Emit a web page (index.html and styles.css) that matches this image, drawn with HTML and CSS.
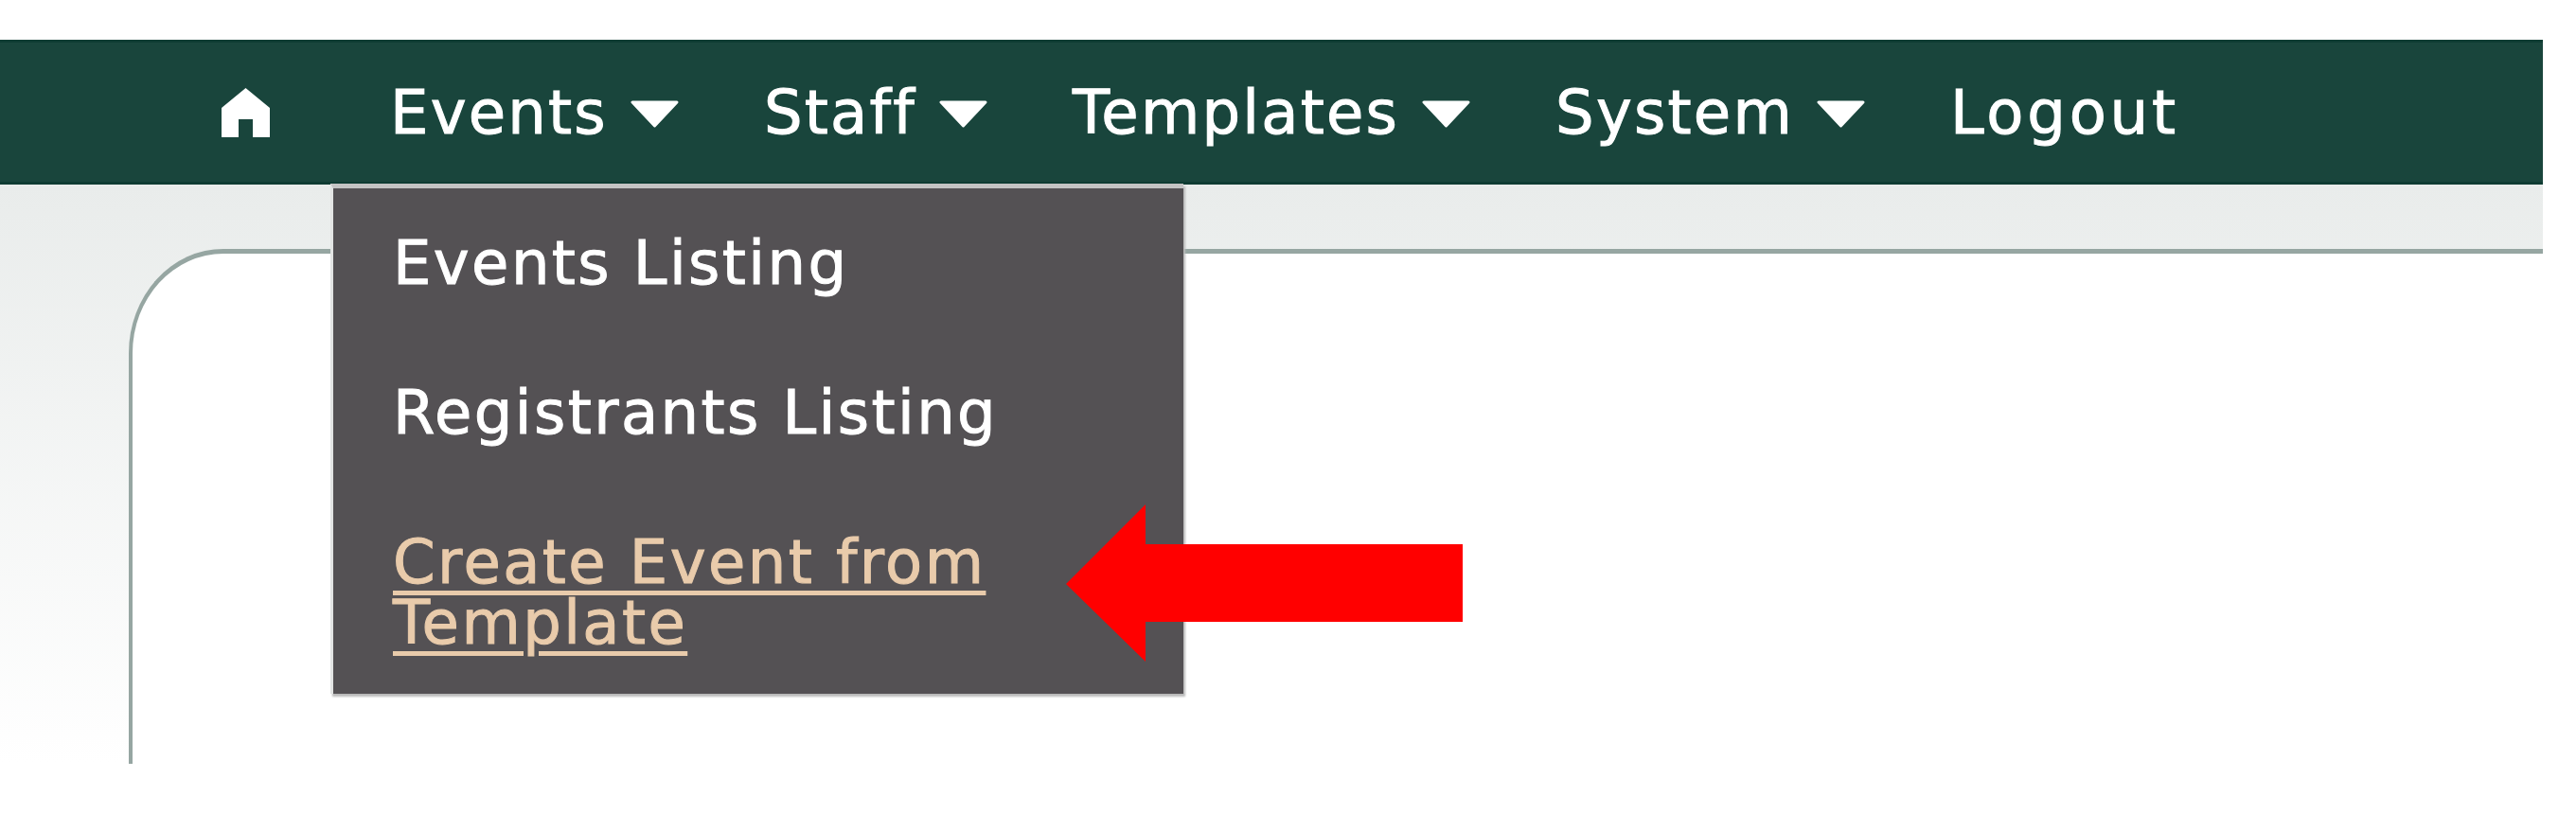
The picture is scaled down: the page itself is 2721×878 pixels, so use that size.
FILE: index.html
```html
<!DOCTYPE html>
<html lang="en">
<head>
  <meta charset="UTF-8" />
  <title>Events</title>
  <link rel="stylesheet" href="styles.css">
</head>
<body>
  <div class="page">
    <nav class="topbar">
      <a class="nav-home" href="#" aria-label="Home">
        <svg class="home-icon" viewBox="0 0 51 52"><path d="M25.5 0 L51 21 V52 H33 V33 H18 V52 H0 V21 Z" /></svg>
      </a>
      <div class="nav-item nav-events">
        <a href="#">Events</a>
        <svg class="caret" viewBox="0 0 53 29"><path d="M3 2 H50 L26.5 27 Z" /></svg>
        <div class="dropdown">
          <a href="#">Events Listing</a>
          <a href="#">Registrants Listing</a>
          <a href="#" class="active">Create Event from Template</a>
        </div>
      </div>
      <div class="nav-item">
        <a href="#">Staff</a>
        <svg class="caret" viewBox="0 0 53 29"><path d="M3 2 H50 L26.5 27 Z" /></svg>
      </div>
      <div class="nav-item">
        <a href="#">Templates</a>
        <svg class="caret" viewBox="0 0 53 29"><path d="M3 2 H50 L26.5 27 Z" /></svg>
      </div>
      <div class="nav-item">
        <a href="#">System</a>
        <svg class="caret" viewBox="0 0 53 29"><path d="M3 2 H50 L26.5 27 Z" /></svg>
      </div>
      <div class="nav-item">
        <a href="#" class="nav-logout">Logout</a>
      </div>
    </nav>

    <div class="shell">
      <div class="card"></div>
    </div>

    <svg class="arrow" viewBox="0 0 419 166"><path d="M0 84 L84 0 V42 H419 V124 H84 V166 Z" /></svg>
  </div>
</body>
</html>
```

FILE: styles.css
```css
html, body {
  margin: 0;
  padding: 0;
  background: #fff;
  font-family: "DejaVu Sans", sans-serif;
}

.page {
  position: relative;
  width: 2686px;
  height: 878px;
  padding-top: 42px;
  box-sizing: border-box;
}

.topbar {
  display: flex;
  align-items: center;
  gap: 89px;
  height: 153px;
  box-sizing: border-box;
  padding-left: 234px;
  background: #19453c;
  border-top: 3px solid #0f3c33;
  border-bottom: 3px solid #0f3c33;
}

.topbar a {
  color: #fff;
  text-decoration: none;
  font-size: 64px;
  letter-spacing: 2.2px;
  -webkit-text-stroke: 1px currentColor;
  filter: blur(0.5px);
}

.nav-home {
  display: flex;
  margin-right: 38px;
}

.home-icon {
  width: 51px;
  height: 52px;
  fill: #fff;
}

.nav-item {
  display: flex;
  align-items: center;
  gap: 23px;
}

.nav-events {
  position: relative;
}

.caret {
  width: 53px;
  height: 29px;
  margin-top: 4px;
  fill: #fff;
  stroke: #fff;
  stroke-width: 3;
  stroke-linejoin: round;
}

.topbar .nav-logout {
  letter-spacing: 3.8px;
}

.dropdown {
  position: absolute;
  top: 112px;
  left: -63px;
  z-index: 5;
  width: 901px;
  box-sizing: border-box;
  background: #545154;
  border-top: 5px solid #c4c4c4;
  border-left: 3px solid #e2e4e3;
  box-shadow: 2px 3px 2px #b9b9b9;
}

.dropdown a {
  display: block;
  padding: 47px 63px;
  line-height: 64px;
  letter-spacing: 2.4px;
}

.dropdown a.active {
  padding-bottom: 43px;
  color: #e9cbab;
  text-decoration: underline;
  text-decoration-thickness: 5px;
  text-underline-offset: 8px;
}

.shell {
  height: 612px;
  box-sizing: border-box;
  padding: 68px 0 0 136px;
  background: linear-gradient(#e9eceb, #ffffff);
}

.card {
  height: 100%;
  box-sizing: border-box;
  background: #fff;
  border-top: 5px solid #96a6a2;
  border-left: 4px solid #96a6a2;
  border-top-left-radius: 100px 110px;
}

.arrow {
  position: absolute;
  top: 533px;
  left: 1126px;
  z-index: 6;
  width: 419px;
  height: 166px;
  fill: #ff0000;
}
```
